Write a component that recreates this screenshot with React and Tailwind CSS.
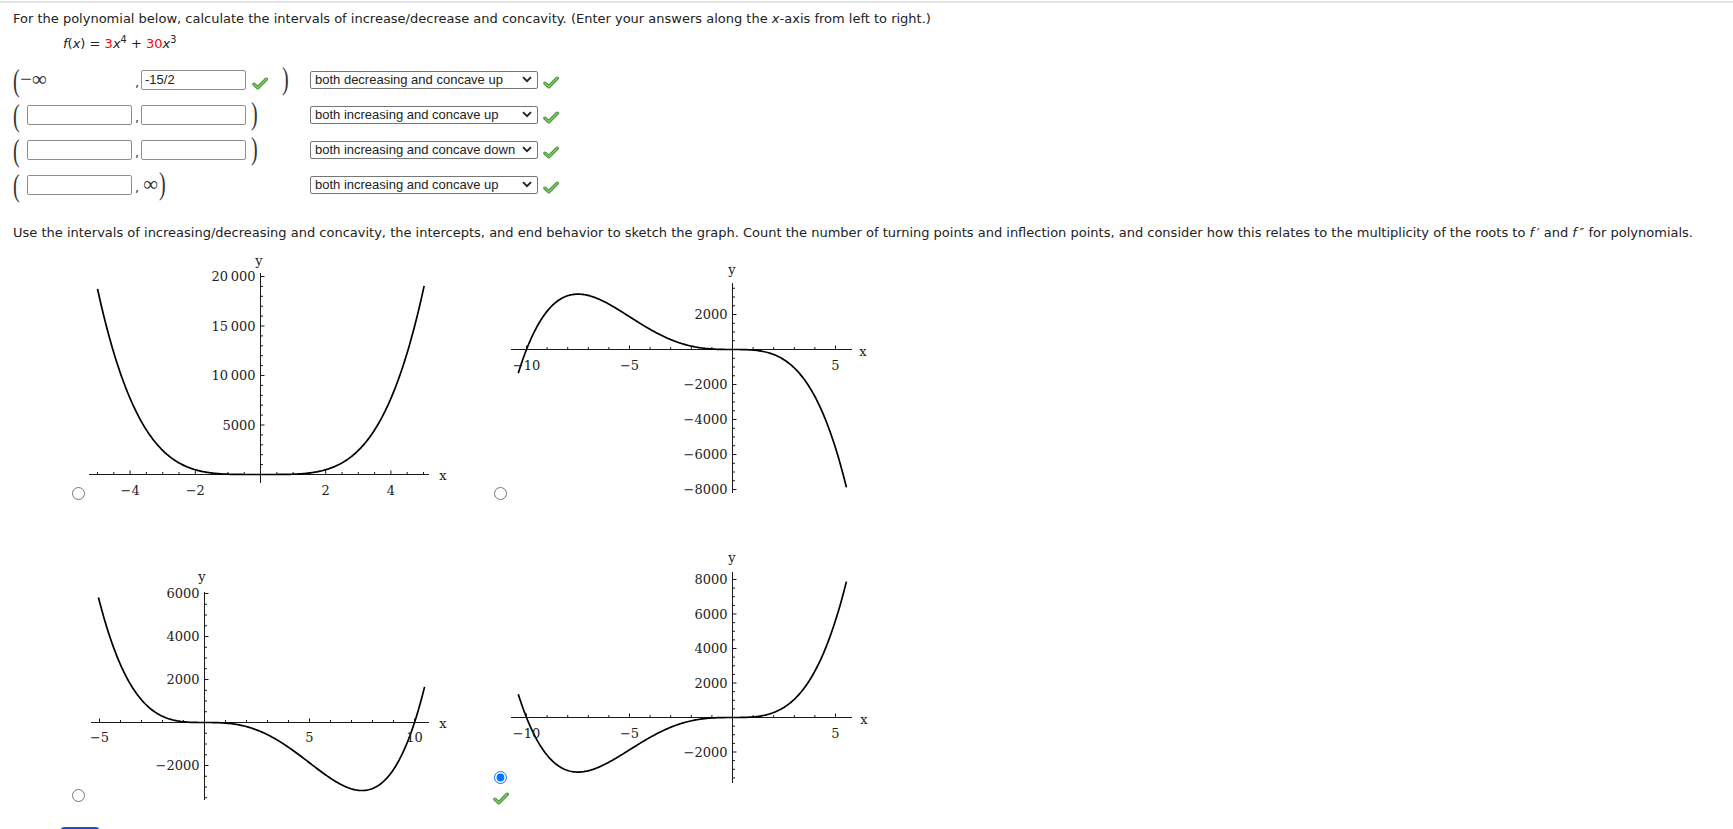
import React from 'react';

const sans = "font-['Liberation_Sans',Arial,sans-serif]";

const range = (a, b, s) => {
  const out = [];
  for (let v = a; v <= b + 1e-9; v += s) out.push(Math.round(v * 100) / 100);
  return out;
};

const fmt = (v) => {
  const abs = Math.abs(v);
  let s = String(abs);
  if (abs >= 10000) s = s.slice(0, -3) + '\u2009' + s.slice(-3);
  return v < 0 ? '\u2212' + s : s;
};

const Check = ({ className = '' }) => (
  <svg className={className} width="16" height="13" viewBox="0 0 16 13">
    <path d="M2 7.2 L5.8 10.8 L14.2 2.2" fill="none" stroke="#3f8a35" strokeWidth="3.4" strokeLinecap="round" strokeLinejoin="round" />
    <path d="M2 7.2 L5.8 10.8 L14.2 2.2" fill="none" stroke="#79c95f" strokeWidth="1.7" strokeLinecap="round" strokeLinejoin="round" />
  </svg>
);

const Paren = ({ children }) => (
  <span className="inline-block w-[7px] font-['Liberation_Serif',serif] text-[20px] leading-none scale-y-[1.6] text-[#333]">
    {children}
  </span>
);

const Box = ({ value = '', className = '' }) => (
  <input
    readOnly
    value={value}
    className={`w-[105px] h-[20px] border border-[#8f8f8f] rounded-[2px] px-[3px] bg-white text-[13px] text-[#222] outline-none ${sans} ${className}`}
  />
);

const Select = ({ label }) => (
  <div className={`flex items-center justify-between w-[228px] h-[18px] border border-[#767676] rounded-[2px] pl-[4px] pr-[5px] text-[13px] leading-none text-[#222] ${sans}`}>
    <span>{label}</span>
    <svg width="10" height="7" viewBox="0 0 10 7">
      <path d="M1 1.2 L5 5.2 L9 1.2" fill="none" stroke="#222" strokeWidth="1.9" />
    </svg>
  </div>
);

const Comma = () => <span className="w-[8px] pl-[2px] text-[13px] text-[#333] self-end mb-[8px] leading-none">,</span>;

const Inf = ({ children, className = '' }) => (
  <span className={`font-['Liberation_Serif',serif] text-[21px] leading-none text-[#333] ${className}`}>{children}</span>
);

const Plot = ({ cfg }) => {
  const { box, o, sx, sy, xAxis, yAxis, xt, yt, xl, yl, xly, f, dom, yLab, xLab } = cfg;
  const X = (v) => o[0] + v * sx;
  const Y = (v) => o[1] - v * sy;
  const pts = [];
  const n = 320;
  for (let i = 0; i <= n; i++) {
    const x = dom[0] + ((dom[1] - dom[0]) * i) / n;
    pts.push(`${X(x).toFixed(2)},${Y(f(x)).toFixed(2)}`);
  }
  return (
    <svg width={box[2]} height={box[3]} viewBox={box.join(' ')} className="block shrink-0">
      <g stroke="#1a1a1a" strokeWidth="1">
        <line x1={xAxis[0]} y1={o[1]} x2={xAxis[1]} y2={o[1]} />
        <line x1={o[0]} y1={yAxis[0]} x2={o[0]} y2={yAxis[1]} />
        {xt.map(([v, major]) => (
          <line key={'x' + v} x1={X(v)} y1={o[1]} x2={X(v)} y2={o[1] - (major ? 4 : 2.5)} />
        ))}
        {yt.map(([v, major]) => (
          <line key={'y' + v} x1={o[0]} y1={Y(v)} x2={o[0] + (major ? 4 : 2.5)} y2={Y(v)} />
        ))}
      </g>
      <polyline points={pts.join(' ')} fill="none" stroke="#000" strokeWidth="1.7" strokeLinejoin="round" />
      <g fontFamily="'DejaVu Serif', serif" fontSize="13" fill="#222">
        {xl.map((v) => (
          <text key={'xl' + v} x={X(v)} y={xly} textAnchor="middle" dominantBaseline="central">{fmt(v)}</text>
        ))}
        {yl.map((v) => (
          <text key={'yl' + v} x={o[0] - 5} y={Y(v)} textAnchor="end" dominantBaseline="central">{fmt(v)}</text>
        ))}
        <text x={yLab[0]} y={yLab[1]} textAnchor="middle" dominantBaseline="central">y</text>
        <text x={xLab[0]} y={xLab[1]} textAnchor="middle" dominantBaseline="central">x</text>
      </g>
    </svg>
  );
};

const g1 = {
  box: [86, 248, 364, 252], o: [260.5, 474.5], sx: 32.6, sy: 0.0099,
  xAxis: [89, 429], yAxis: [273, 483],
  xt: range(-5, 5, 0.5).filter((v) => v !== 0).map((v) => [v, v % 2 === 0]),
  yt: range(1000, 20000, 1000).map((v) => [v, v % 5000 === 0]),
  xl: [-4, -2, 2, 4], xly: 490, yl: [5000, 10000, 15000, 20000],
  yLab: [259, 260], xLab: [443, 475],
  f: (x) => 30 * x ** 4, dom: [-5, 5.02],
};

const g2 = {
  box: [508, 248, 364, 252], o: [732.5, 349.5], sx: 20.6, sy: 0.0175,
  xAxis: [511, 852], yAxis: [283, 493],
  xt: range(-10, 5, 1).filter((v) => v !== 0).map((v) => [v, v % 5 === 0]),
  yt: range(-8000, 3500, 500).filter((v) => v !== 0).map((v) => [v, v % 2000 === 0]),
  xl: [-10, -5, 5], xly: 365, yl: [2000, -2000, -4000, -6000, -8000],
  yLab: [732, 269], xLab: [863, 351],
  f: (x) => -(3 * x ** 4 + 30 * x ** 3), dom: [-10.4, 5.53],
};

const g3 = {
  box: [86, 550, 364, 255], o: [204.5, 722.5], sx: 21, sy: 0.0215,
  xAxis: [91, 429], yAxis: [592, 800],
  xt: range(-5, 10, 1).filter((v) => v !== 0).map((v) => [v, v % 5 === 0]),
  yt: range(-3500, 6000, 500).filter((v) => v !== 0).map((v) => [v, v % 2000 === 0]),
  xl: [-5, 5, 10], xly: 737, yl: [6000, 4000, 2000, -2000],
  yLab: [202, 576], xLab: [443, 723],
  f: (x) => 3 * x ** 4 - 30 * x ** 3, dom: [-5.05, 10.48],
};

const g4 = {
  box: [508, 550, 364, 255], o: [732.5, 717.5], sx: 20.6, sy: 0.01725,
  xAxis: [511, 852], yAxis: [572, 783],
  xt: range(-10, 5, 1).filter((v) => v !== 0).map((v) => [v, v % 5 === 0]),
  yt: range(-3500, 8000, 500).filter((v) => v !== 0).map((v) => [v, v % 2000 === 0]),
  xl: [-10, -5, 5], xly: 733, yl: [8000, 6000, 4000, 2000, -2000],
  yLab: [732, 557], xLab: [864, 719],
  f: (x) => 3 * x ** 4 + 30 * x ** 3, dom: [-10.4, 5.53],
};

const Radio = ({ checked = false, className = '' }) => (
  <input type="radio" name="graph" readOnly checked={checked} className={`m-0 w-[13px] h-[13px] shrink-0 ${className}`} />
);

export default function App() {
  return (
    <div className="h-screen overflow-hidden bg-white text-[#222] font-['DejaVu_Sans',Verdana,sans-serif] text-[13px]">
      <div className="mt-[1px] h-[2px] bg-[#e4e4e4]" />
      <div className="px-[13px]">
        <p className="mt-[8px] leading-[16px]">
          For the polynomial below, calculate the intervals of increase/decrease and concavity. (Enter your answers along the <i>x</i>-axis from left to right.)
        </p>
        <p className="mt-[9px] pl-[50px] leading-[16px] text-[13px]">
          <i>f</i>(<i>x</i>) = <span className="text-[#ff0000]">3</span><i>x</i><sup>4</sup> + <span className="text-[#ff0000]">30</span><i>x</i><sup>3</sup>
        </p>

        <div className="mt-[10px] flex flex-col">
          {/* row 1 */}
          <div className="flex items-center h-[35px]">
            <div className="flex items-center w-[297px] h-full">
              <Paren>(</Paren>
              <div className="w-[113px] flex items-center">
                <Inf>{'\u2212\u221e'}</Inf>
              </div>
              <Comma />
              <Box value="-15/2" />
              <Check className="ml-[6px] mt-[7px]" />
              <span className="ml-[14px]"><Paren>)</Paren></span>
            </div>
            <Select label="both decreasing and concave up" />
            <Check className="ml-[5px] mt-[6px]" />
          </div>
          {/* row 2 */}
          <div className="flex items-center h-[35px]">
            <div className="flex items-center w-[297px] h-full">
              <Paren>(</Paren>
              <div className="w-[113px] flex items-center">
                <Box className="ml-[7px]" />
              </div>
              <Comma />
              <Box />
              <span className="ml-[5px]"><Paren>)</Paren></span>
            </div>
            <Select label="both increasing and concave up" />
            <Check className="ml-[5px] mt-[6px]" />
          </div>
          {/* row 3 */}
          <div className="flex items-center h-[35px]">
            <div className="flex items-center w-[297px] h-full">
              <Paren>(</Paren>
              <div className="w-[113px] flex items-center">
                <Box className="ml-[7px]" />
              </div>
              <Comma />
              <Box />
              <span className="ml-[5px]"><Paren>)</Paren></span>
            </div>
            <Select label="both increasing and concave down" />
            <Check className="ml-[5px] mt-[6px]" />
          </div>
          {/* row 4 */}
          <div className="flex items-center h-[35px]">
            <div className="flex items-center w-[297px] h-full">
              <Paren>(</Paren>
              <div className="w-[113px] flex items-center">
                <Box className="ml-[7px]" />
              </div>
              <Comma />
              <Inf className="ml-[2px]">{'\u221e'}</Inf>
              <span className="ml-[1px]"><Paren>)</Paren></span>
            </div>
            <Select label="both increasing and concave up" />
            <Check className="ml-[5px] mt-[6px]" />
          </div>
        </div>

        <p className="mt-[23px] leading-[16px]">
          Use the intervals of increasing/decreasing and concavity, the intercepts, and end behavior to sketch the graph. Count the number of turning points and inflection points, and consider how this relates to the multiplicity of the roots to <i>f</i>{'\u2009\u2032'} and <i>f</i>{'\u2009\u2033'} for polynomials.
        </p>

        <div className="mt-[7px] pl-[59px] flex flex-col gap-[50px]">
          <div className="flex items-end">
            <div className="flex items-end w-[422px]">
              <Radio />
              <div className="ml-[1px]"><Plot cfg={g1} /></div>
            </div>
            <div className="flex items-end w-[422px]">
              <Radio />
              <div className="ml-[1px]"><Plot cfg={g2} /></div>
            </div>
          </div>
          <div className="flex items-end">
            <div className="flex items-end w-[422px]">
              <Radio className="mb-[3px]" />
              <div className="ml-[1px]"><Plot cfg={g3} /></div>
            </div>
            <div className="flex items-end w-[422px]">
              <div className="flex flex-col items-center w-[13px]">
                <Radio checked />
                <Check className="mt-[8px] shrink-0" />
              </div>
              <div className="ml-[1px]"><Plot cfg={g4} /></div>
            </div>
          </div>
        </div>

        <div className="mt-[22px] ml-[48px] w-[38px] h-[20px] border-2 border-[#1f4fc9] rounded-[3px]" />
      </div>
    </div>
  );
}
